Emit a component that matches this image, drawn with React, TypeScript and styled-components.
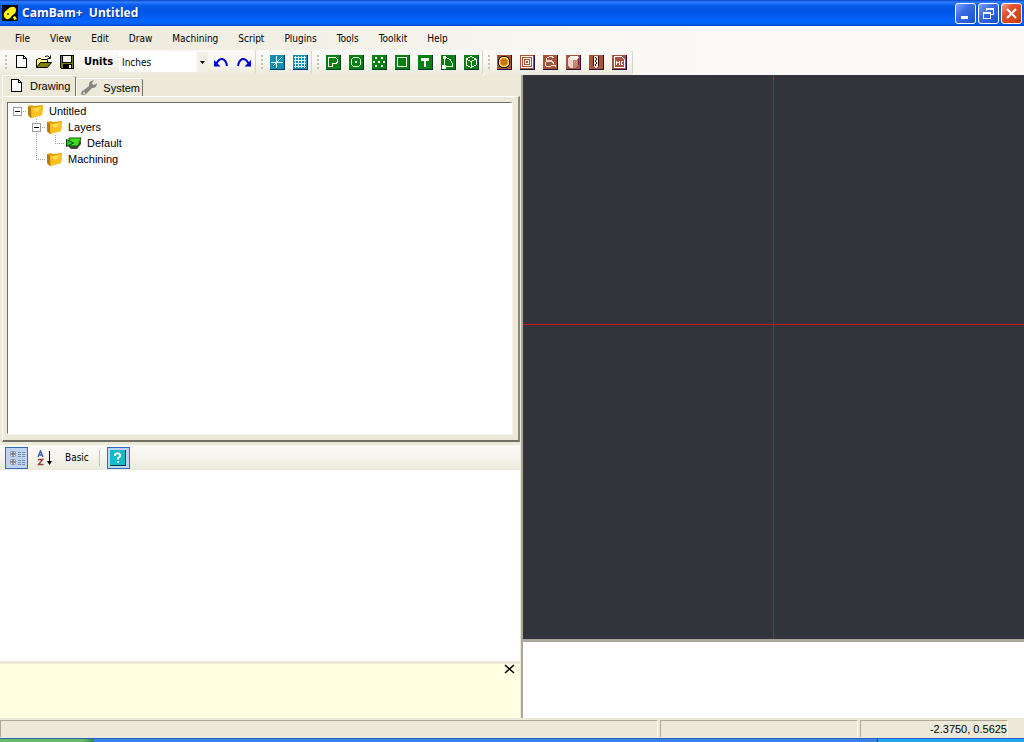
import React from 'react';
import styled, { createGlobalStyle, css } from 'styled-components';

const tahoma = `'DejaVu Sans Condensed', Tahoma, 'Liberation Sans', sans-serif`;
const sans = `'Liberation Sans', Arial, sans-serif`;

const GlobalStyle = createGlobalStyle`
  *, *::before, *::after { box-sizing: border-box; }
  body { margin: 0; background: #ece9d8; overflow: hidden; }
  button, select { font: inherit; color: inherit; border: 0; padding: 0; background: none; }
  svg { display: block; flex: none; }
`;

const Window = styled.div`
  display: flex;
  flex-direction: column;
  height: 100vh;
  background: #ece9d8;
  font: 10px/16px ${tahoma};
  color: #000;
`;

const TitleBar = styled.header`
  flex: none;
  display: flex;
  align-items: center;
  height: 26px;
  padding: 0 2px;
  background: linear-gradient(#0a3fc4 0, #2f80fb 2px, #0a5ff0 5px, #0354e4 9px, #0257ea 14px, #0565fe 21px, #0560f4 24px, #0343c4 26px);
`;

const Title = styled.h1`
  flex: 1;
  margin: 0 0 0 4px;
  font: bold 12px/18px 'Open Sans', sans-serif;
  color: #fff;
  white-space: pre;
  text-shadow: 1px 1px 0 #0a2f8a;
`;

const Caption = styled.button<{ $close?: boolean }>`
  display: grid;
  place-items: center;
  width: 21px;
  height: 21px;
  margin-left: 2px;
  border: 1px solid #fff;
  border-radius: 3px;
  background: ${(p) =>
    p.$close
      ? 'linear-gradient(135deg, #f0a080 0, #e0522c 35%, #d8421a 80%, #b83010)'
      : 'linear-gradient(135deg, #7fa4f4 0, #3a6be4 40%, #2458dc 80%, #1a48c0)'};
`;

const MenuBar = styled.nav`
  flex: none;
  display: flex;
  align-items: center;
  height: 24px;
  padding: 2px 0 0 5px;
  background: linear-gradient(90deg, #ece9d8 0, #f4f2e9 35%, #fbfaf7 70%);
`;

const MenuItem = styled.button`
  padding: 0 10px;
`;

const ToolRow = styled.div`
  flex: none;
  display: flex;
  height: 25px;
  background: linear-gradient(90deg, #ece9d8 0, #f4f2e9 35%, #fbfaf7 70%);
`;

const Bar = styled.div`
  display: flex;
  align-items: center;
  height: 25px;
  padding-bottom: 1px;
  border-radius: 3px;
  background: linear-gradient(#fbfaf8 0, #f7f6f0 50%, #eceadb 100%);
  border-right: 1px solid #d9d6c5;

  &:last-child {
    padding-right: 2px;
  }
`;

const Grip = styled.span`
  width: 9px;
  height: 14px;
  padding: 0 2px 0 5px;
  background: repeating-linear-gradient(#c4c0ae 0 2px, transparent 2px 4px) content-box;
`;

const ToolButton = styled.button<{ $active?: boolean }>`
  display: grid;
  place-items: center;
  width: 23px;
  height: 22px;
  padding-left: 1px;
  ${(p) =>
    p.$active &&
    css`
      padding-left: 0;
      border: 1px solid #316ac5;
      background: #c1d2ee;
    `}
`;

const UnitsLabel = styled.label`
  width: 41px;
  padding-left: 6px;
  font-weight: bold;
  font-size: 11px;
`;

const ComboFrame = styled.span`
  display: grid;
  grid-template-columns: 1fr 11px;
  width: 89px;
  height: 20px;
  margin-right: 1px;
  background: #fff;
`;

const Combo = styled.select`
  grid-area: 1 / 1 / 2 / 3;
  appearance: none;
  padding: 2px 0 0 3px;
  font-family: ${tahoma};
  font-size: 10px;
  outline: 0;
`;

const ComboArrow = styled.span`
  grid-area: 1 / 2 / 2 / 3;
  display: grid;
  place-items: center;
  background: #f1efe3;
  pointer-events: none;
`;

const Workspace = styled.main`
  flex: 1;
  min-height: 0;
  display: grid;
  grid-template-columns: minmax(0, 521fr) minmax(0, 503fr);
`;

const LeftPane = styled.section`
  display: flex;
  flex-direction: column;
  min-height: 0;
  border-right: 1px solid #ece9d8;
`;

const RightPane = styled.section`
  display: flex;
  flex-direction: column;
  min-height: 0;
  border-left: 2px solid #aca899;
`;

const Tabs = styled.div`
  flex: none;
  display: flex;
  align-items: flex-end;
  height: 21px;
  padding-left: 2px;
`;

const Tab = styled.button<{ $selected?: boolean }>`
  display: flex;
  align-items: center;
  gap: 6px;
  height: ${(p) => (p.$selected ? 21 : 18)}px;
  padding: ${(p) => (p.$selected ? '0 6px 0 5px' : '0 3px 0 4px')};
  border: solid #fff;
  border-width: 1px 0 0 1px;
  border-radius: 2px 2px 0 0;
  box-shadow: inset -1px 0 #716f64;
  font: 11px/16px ${sans};
`;

const TabPage = styled.div`
  flex: 332;
  min-height: 0;
  display: flex;
  margin-left: 2px;
  padding: 5px 6px 6px 4px;
  border: solid #fff;
  border-width: 1px 2px 2px 1px;
  border-right-color: #8a887a;
  border-bottom-color: #716f64;
`;

const Tree = styled.div`
  flex: 1;
  border: 1px solid #fff;
  border-top: 1px solid #716f64;
  border-left: 1px solid #716f64;
  box-shadow: 1px 1px #f6f4ea;
  background: #fff;
  font: 11px/16px ${sans};
`;

const TreeRow = styled.div`
  display: flex;
  height: 16px;
`;

const TreeText = styled.span`
  padding-left: 3px;
`;

const PropertyBar = styled.div`
  flex: none;
  display: flex;
  align-items: center;
  height: 25px;
  margin-top: 3px;
  padding-left: 5px;
  gap: 5px;
  background: linear-gradient(#fbfaf8, #f5f4ed 50%, #eceadb);
`;

const TextButton = styled.button`
  height: 22px;
  padding: 0 4px;
  margin-right: 1px;
`;

const Divider = styled.span`
  width: 1px;
  height: 16px;
  margin-right: 2px;
  background: #c5c2b8;
`;

const PropertyGrid = styled.div`
  flex: 191;
  background: #fff;
`;

const HelpPane = styled.div`
  flex: none;
  display: flex;
  justify-content: flex-end;
  align-items: flex-start;
  height: 57px;
  padding: 0 4px;
  border-top: 3px solid #ece9d8;
  background: #ffffe1;
`;

const CloseButton = styled.button`
  display: grid;
  place-items: center;
  width: 13px;
  height: 10px;
`;

const Canvas = styled.div`
  flex: 1;
  min-height: 0;
  background: #33333c;
`;

const Output = styled.div`
  flex: none;
  height: 79px;
  border-top: 3px solid #aca899;
  background: #fff;
`;

const StatusBar = styled.footer`
  flex: none;
  display: grid;
  grid-template-columns: 1fr 198px 148px;
  gap: 2px;
  height: 20px;
  padding: 2px 16px 1px 0;
  background: #ece9d8;
`;

const StatusCell = styled.div`
  border: 1px solid #fff;
  border-top-color: #aca899;
  border-left-color: #aca899;
  border-bottom: 0;
  text-align: right;
  font: 11px/16px ${sans};
`;

const TaskStrip = styled.div`
  flex: none;
  height: 4px;
  border-top: 1px solid #2a62c4;
  background: linear-gradient(90deg, #6cb968 0 82px, #2e8b3c 94px, #3784ea 94px calc(100% - 147px), #0b3f9a calc(100% - 147px) calc(100% - 146px), #1fa5f0 calc(100% - 146px));
`;

const Icon = ({ w = 16, h = 16, crisp, children }: { w?: number; h?: number; crisp?: boolean; children: React.ReactNode }) => (
  <svg
    width={w}
    height={h}
    viewBox={`0 0 ${w} ${h}`}
    fill="none"
    shapeRendering={crisp ? 'crispEdges' : undefined}
    aria-hidden="true"
  >
    {children}
  </svg>
);

const AppIcon = () => (
  <Icon>
    <rect width="16" height="16" fill="#0b0b08" />
    <path d="M2 11C1 7 4 6 6 4C9 1 14 1 14 5C14 9 11 9 9 12C7 15 3 15 2 11Z" fill="#fff21a" />
    <circle cx="6" cy="9" r="1" fill="#3a3600" />
    <path d="M11 12l2-1 2 3-3 1z" fill="#fff21a" />
  </Icon>
);

const PageIcon = () => (
  <Icon crisp>
    <path d="M3.500 1.500H10.500L13.500 4.500V13.500H3.500Z" fill="#fff" stroke="#000" />
    <path d="M10.500 1.500V4.500H13.500" stroke="#000" />
  </Icon>
);

const OpenIcon = () => (
  <Icon>
    <path d="M.5 13.500V5.500H1.500L2.500 4.500H4.500L5.500 5.500H11.500V8.500" fill="#ffff8c" stroke="#000" />
    <path d="M.5 13.500L4.500 8.500H15.500L11.500 13.500Z" fill="#808000" stroke="#000" />
    <path d="M9 2.500Q12 .5 14 4M14.500 1.500V4.500H11.500" stroke="#000" />
  </Icon>
);

const SaveIcon = () => (
  <Icon crisp>
    <path d="M1.500 1.500H14.500V14.500H2.500L1.500 13.500Z" fill="#808000" stroke="#000" />
    <rect x="3" y="1" width="10" height="8" fill="#000" />
    <rect x="4" y="2" width="8" height="6" fill="#f4f4ec" />
    <rect x="4" y="10" width="9" height="5" fill="#000" />
    <rect x="10" y="11" width="2" height="3" fill="#fff" />
  </Icon>
);

const UndoIcon = ({ flip }: { flip?: boolean }) => (
  <Icon>
    <g transform={flip ? 'translate(16 0) scale(-1 1)' : undefined}>
      <path d="M1 6V12.500H7.500Z" fill="#0000d0" />
      <path d="M3.500 9.500Q6 4.500 9.500 5Q13 6 14 12" stroke="#0000d0" strokeWidth="2" />
    </g>
  </Icon>
);

type TileKind = 'green' | 'teal' | 'brown';
const tileColors: Record<TileKind, [string, string]> = {
  green: ['#078012', '#033c26'],
  teal: ['#148fb4', '#06386e'],
  brown: ['#a8543a', '#2c0c3c'],
};

const Tile = ({ kind, children }: { kind: TileKind; children: React.ReactNode }) => (
  <Icon crisp>
    <rect x="1" y="1" width="15" height="15" fill={tileColors[kind][1]} />
    <rect x="1" y="1" width="14" height="14" fill={tileColors[kind][0]} />
    {children}
  </Icon>
);

const gridTools = [
  ['Snap to axes', <path d="M2 8.500H14M7.500 2V14M3.500 12.500L12.500 3.500" stroke="#d9ffff" />],
  ['Show grid', <path d="M2 3.500H14M2 6.500H14M2 9.500H14M2 12.500H14M3.500 2V14M6.500 2V14M9.500 2V14M12.500 2V14" stroke="#d9f6ff" />],
] as const;

const drawTools = [
  ['Polyline', <path d="M3.500 3.500H10.500L12.500 5.500V8.500L10.500 9.500H7.500V12.500H3.500Z" stroke="#fff" />],
  [
    'Circle',
    <>
      <circle cx="8" cy="8" r="5" stroke="#e6ffe6" strokeWidth="1" />
      <rect x="7" y="7" width="2" height="2" fill="#fff" />
    </>,
  ],
  ['Point list', <path d="M4 3h2v2H4zM10 3h2v2h-2zM2 7h2v2H2zM7 7h2v2H7zM12 7h2v2h-2zM4 11h2v2H4zM10 11h2v2h-2z" fill="#fff" />],
  ['Rectangle', <path d="M3.500 3.500H12.500V12.500H3.500Z" stroke="#fff" />],
  ['Text', <path d="M4 4H12V7H9V13H7V7H4Z" fill="#fff" />],
  [
    'Arc',
    <>
      <path d="M4.500 12V3.500Q12.500 4 12.500 12.500H4.500" stroke="#e6ffe6" />
      <path d="M3 2h3v3H3zM2 11h4v4H2z" fill="#fff" />
    </>,
  ],
  ['Surface', <path d="M8 2.500L13 5V11L8 13.500L3 11V5ZM3 5L8 7.500L13 5M8 7.500V13.500" stroke="#fff" />],
] as const;

const machineTools = [
  [
    'Profile',
    <>
      <circle cx="8" cy="8" r="6" fill="#e09818" stroke="#20100c" />
      <circle cx="8" cy="8" r="4.500" stroke="#ffe070" />
      <circle cx="8" cy="8" r="3" fill="#c87410" />
    </>,
  ],
  ['Pocket', <path d="M2.500 2.500H13.500V13.500H2.500ZM4.500 4.500H11.500V11.500H4.500ZM6.500 6.500H9.500V9.500H6.500Z" stroke="#fff4e8" />],
  ['Engrave', <path d="M12 4Q9 1 5 4Q3 7 8 7.500Q13 8 11 10M10 7Q3 6 3 10Q4 14 9 12Q12 10 14 12.500" stroke="#f4e4dc" />],
  [
    '3D profile',
    <>
      <path d="M3 4V12L6 14H10L13 12V4Z" fill="#c88474" />
      <path d="M3 4V12L6 14H8V5Z" fill="#f0d4cc" />
      <path d="M3 4L5 2H12L14 4L11 6H5Z" fill="#fcf4ec" />
      <path d="M13.500 5V11" stroke="#60281c" />
    </>,
  ],
  [
    'Drill',
    <>
      <path d="M6 2H10V12L9 14H7L6 12Z" fill="#f2e6d8" />
      <path d="M5.500 2V12M10.500 2V12" stroke="#301410" />
      <path d="M7 3h1v1H7zM8 4h1v2H8zM7 6h1v2H7zM8 8h1v2H8zM7 10h1v2H7z" fill="#301410" />
    </>,
  ],
  [
    'NC file',
    <>
      <path d="M3.500 2.500H10.500L13.500 5.500V13.500H3.500Z" stroke="#fff" />
      <path d="M5.500 11V7M6 8.500H8M8.500 11V7M12 7.500H10.500V10.500H12" stroke="#fff" />
    </>,
  ],
] as const;

const FolderIcon = () => (
  <Icon w={19}>
    <path d="M1 3L5 2L7 3L16 2L15 12L4 15L1 12Z" fill="#e0a010" />
    <path d="M4 5L16 3L15 12L5 15Z" fill="#fcc020" />
    <path d="M5 6L14 4L10 9Z" fill="#ffdc58" />
    <path d="M1 3V12L4 15V5Z" fill="#b87c08" />
  </Icon>
);

const LayerIcon = () => (
  <Icon w={19}>
    <path d="M3 11L13 10L16 5V9L12 14H6Z" fill="#444" />
    <path d="M4 3H16L13 11H4Z" fill="#3be01c" stroke="#185010" />
    <path d="M1.500 4.500V11.500L8.500 8Z" fill="#20d020" stroke="#063c08" />
  </Icon>
);

const WrenchIcon = () => (
  <Icon>
    <path d="M10 1L13 0L11 3L12 5L15 4L16 3Q16 8 11 8L5 14Q2 16 0 14Q0 11 3 10L8 6Q8 2 10 1Z" fill="#858585" />
    <circle cx="3" cy="13" r="1" fill="#ece9d8" />
  </Icon>
);

const Branch = ({ up, down, right, box }: { up?: boolean; down?: boolean; right?: boolean; box?: boolean }) => (
  <Icon w={19}>
    <g stroke="#a0a0a0" strokeDasharray="1 1">
      {up && <path d="M9.500 0V8" />}
      {down && <path d="M9.500 8V16" />}
      {right && <path d="M9 8.500H19" />}
    </g>
    {box && (
      <>
        <rect x="5.500" y="4.500" width="8" height="8" fill="#fff" stroke="#9a9a9a" />
        <path d="M7 8.500H12" stroke="#000" />
      </>
    )}
  </Icon>
);

const menus = ['File', 'View', 'Edit', 'Draw', 'Machining', 'Script', 'Plugins', 'Tools', 'Toolkit', 'Help'];

const TileBar = ({ kind, tools }: { kind: TileKind; tools: ReadonlyArray<readonly [string, React.ReactNode]> }) => (
  <Bar>
    <Grip />
    {tools.map(([name, art]) => (
      <ToolButton key={name} aria-label={name}>
        <Tile kind={kind}>{art}</Tile>
      </ToolButton>
    ))}
  </Bar>
);

export default function App() {
  return (
    <Window>
      <GlobalStyle />
      <TitleBar>
        <AppIcon />
        <Title>{'CamBam+  Untitled'}</Title>
        <Caption aria-label="Minimize">
          <Icon w={15} h={15}>
            <rect x="3" y="10" width="7" height="3" fill="#fff" />
          </Icon>
        </Caption>
        <Caption aria-label="Restore">
          <Icon w={15} h={15} crisp>
            <path d="M5.500 5V2.500H12.500V8.500H10M5 3.500H13" stroke="#fff" />
            <path d="M2.500 6.500H9.500V12.500H2.500ZM2 7.500H10" stroke="#fff" />
          </Icon>
        </Caption>
        <Caption aria-label="Close" $close>
          <Icon w={15} h={15}>
            <path d="M3 3L12 12M12 3L3 12" stroke="#fff" strokeWidth="2" />
          </Icon>
        </Caption>
      </TitleBar>

      <MenuBar aria-label="Main menu">
        {menus.map((m) => (
          <MenuItem key={m}>{m}</MenuItem>
        ))}
      </MenuBar>

      <ToolRow>
        <Bar>
          <Grip />
          <ToolButton aria-label="New"><PageIcon /></ToolButton>
          <ToolButton aria-label="Open"><OpenIcon /></ToolButton>
          <ToolButton aria-label="Save"><SaveIcon /></ToolButton>
          <UnitsLabel htmlFor="units">Units</UnitsLabel>
          <ComboFrame>
            <Combo id="units" defaultValue="Inches">
              <option>Inches</option>
              <option>Millimeters</option>
            </Combo>
            <ComboArrow>
              <Icon w={5} h={3}>
                <path d="M0 0H5L2.500 3Z" fill="#000" />
              </Icon>
            </ComboArrow>
          </ComboFrame>
          <ToolButton aria-label="Undo"><UndoIcon /></ToolButton>
          <ToolButton aria-label="Redo"><UndoIcon flip /></ToolButton>
        </Bar>
        <TileBar kind="teal" tools={gridTools} />
        <TileBar kind="green" tools={drawTools} />
        <TileBar kind="brown" tools={machineTools} />
      </ToolRow>

      <Workspace>
        <LeftPane>
          <Tabs role="tablist">
            <Tab role="tab" aria-selected="true" $selected><PageIcon />Drawing</Tab>
            <Tab role="tab" aria-selected="false"><WrenchIcon />System</Tab>
          </Tabs>
          <TabPage>
            <Tree role="tree">
              <TreeRow role="treeitem">
                <Branch right box />
                <FolderIcon />
                <TreeText>Untitled</TreeText>
              </TreeRow>
              <TreeRow role="treeitem">
                <Branch />
                <Branch up down right box />
                <FolderIcon />
                <TreeText>Layers</TreeText>
              </TreeRow>
              <TreeRow role="treeitem">
                <Branch />
                <Branch up down />
                <Branch up right />
                <LayerIcon />
                <TreeText>Default</TreeText>
              </TreeRow>
              <TreeRow role="treeitem">
                <Branch />
                <Branch up right />
                <FolderIcon />
                <TreeText>Machining</TreeText>
              </TreeRow>
            </Tree>
          </TabPage>
          <PropertyBar>
            <ToolButton aria-label="Categorized" $active>
              <Icon>
                <g stroke="#3c4858">
                  <rect x="1.500" y="1.500" width="5" height="5" rx="1" fill="#fff" stroke="#8894a8" />
                  <rect x="1.500" y="9.500" width="5" height="5" rx="1" fill="#fff" stroke="#8894a8" />
                  <path d="M2 4H6M4 2V6M2 12H6M4 10V14" />
                </g>
                <path d="M9 2.500H12M13 2.500H16M9 4.500H12M13 4.500H16M9 6.500H12M13 6.500H16M9 10.500H12M13 10.500H16M9 12.500H12M13 12.500H16M9 14.500H12M13 14.500H16" stroke="#7890b8" />
              </Icon>
            </ToolButton>
            <ToolButton aria-label="Alphabetical">
              <Icon>
                <path d="M1 7L3.500 1L6 7M2 5H5" stroke="#4060a8" strokeWidth="1.500" />
                <path d="M1 9.500H5.500L1.500 14.500H6.500" stroke="#984038" strokeWidth="1.500" />
                <path d="M12.500 1V14" stroke="#000" />
                <path d="M10 11H15L12.500 15Z" fill="#000" />
              </Icon>
            </ToolButton>
            <TextButton>Basic</TextButton>
            <Divider />
            <ToolButton aria-label="Help" $active>
              <Icon>
                <rect x="0" y="0" width="16" height="16" fill="#063c50" />
                <rect x="0" y="0" width="15" height="15" fill="#10bcc8" />
                <path d="M5 6V4.500L6.500 3.500H8.500L10 4.500V6.500L8 8V9.500M8 11V13" stroke="#fff" strokeWidth="2" />
              </Icon>
            </ToolButton>
          </PropertyBar>
          <PropertyGrid />
          <HelpPane>
            <CloseButton aria-label="Close help">
              <Icon w={11} h={10}>
                <path d="M1 1L10 9M10 1L1 9" stroke="#000" strokeWidth="1.500" />
              </Icon>
            </CloseButton>
          </HelpPane>
        </LeftPane>
        <RightPane>
          <Canvas>
            <svg width="100%" height="100%" role="img" aria-label="Drawing view">
              <line x1="50%" x2="50%" y1="0" y2="100%" stroke="#008000" />
              <line x1="0" x2="100%" y1="249.5" y2="249.5" stroke="#c8141c" />
            </svg>
          </Canvas>
          <Output />
        </RightPane>
      </Workspace>

      <StatusBar>
        <StatusCell />
        <StatusCell />
        <StatusCell>-2.3750, 0.5625</StatusCell>
      </StatusBar>
      <TaskStrip />
    </Window>
  );
}
